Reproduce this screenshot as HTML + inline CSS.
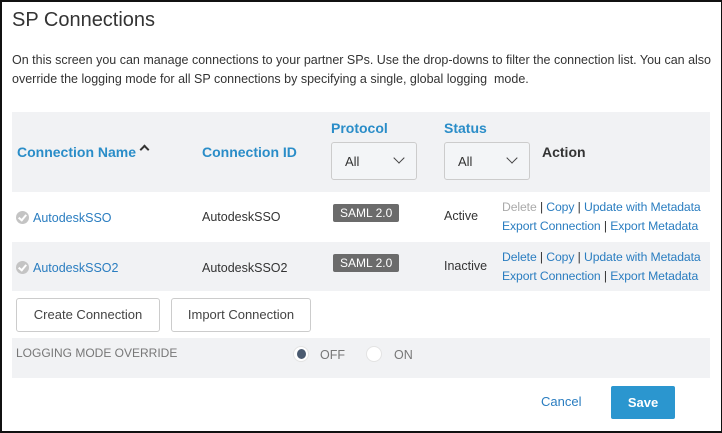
<!DOCTYPE html>
<html><head><style>
*{margin:0;padding:0;box-sizing:border-box}
body{width:722px;height:433px;background:#fff;font-family:"Liberation Sans",sans-serif;position:relative;overflow:hidden;color:#333}
.frame{position:absolute;left:0;top:0;width:722px;height:433px;border:2px solid #111;border-right-width:1px}
.a{position:absolute;white-space:nowrap}
.blue{color:#2a8dc8}
.link{color:#2a7dc0}
.gray{background:#f1f2f4}
.sel{position:absolute;width:86px;height:38px;border:1px solid #ccc;border-radius:3px;background:#f3f5f7;font-size:13px;padding:11px 0 0 13px}
.chev{position:absolute;right:13px;top:11px;width:8px;height:8px;border-right:1.5px solid #444;border-bottom:1.5px solid #444;transform:rotate(45deg)}
.badge{position:absolute;background:#6b6b6b;color:#fff;font-size:12px;padding:2px 7px;border-radius:2px;height:18px}
.chk{position:absolute;width:13px;height:13px;border-radius:50%;background:#c4c4c4}
.chk:after{content:"";position:absolute;left:4px;top:2px;width:3px;height:6px;border-right:2px solid #fff;border-bottom:2px solid #fff;transform:rotate(40deg)}
.btn{position:absolute;height:34px;border:1px solid #ccc;border-radius:3px;font-size:13px;color:#444;text-align:center;line-height:32px;background:#fff}
.act{font-size:12.2px;line-height:19px;letter-spacing:-0.1px}
</style></head><body>
<div class="frame"></div>
<div class="a" style="left:12px;top:9px;font-size:20px;color:#333">SP Connections</div>
<div class="a" style="left:12px;top:51px;font-size:12.5px;line-height:19px;color:#333">On this screen you can manage connections to your partner SPs. Use the drop-downs to filter the connection list. You can also<br>override the logging mode for all SP connections by specifying a single, global logging&nbsp; mode.</div>

<div class="a gray" style="left:12px;top:112px;width:698px;height:80px"></div>
<div class="a blue" style="left:17px;top:144px;font-size:14px;font-weight:bold">Connection Name</div>
<div class="a" style="left:141px;top:146px;width:7px;height:7px;border-left:2px solid #333;border-top:2px solid #333;transform:rotate(45deg)"></div>
<div class="a blue" style="left:202px;top:144px;font-size:14px;font-weight:bold">Connection ID</div>
<div class="a blue" style="left:331px;top:120px;font-size:14px;font-weight:bold">Protocol</div>
<div class="a blue" style="left:444px;top:120px;font-size:14px;font-weight:bold">Status</div>
<div class="sel" style="left:331px;top:142px">All<span class="chev"></span></div>
<div class="sel" style="left:444px;top:142px">All<span class="chev"></span></div>
<div class="a" style="left:542px;top:144px;font-size:14px;font-weight:bold;color:#333">Action</div>

<div class="chk" style="left:16px;top:211px"></div>
<div class="a link" style="left:33px;top:211px;font-size:12.5px">AutodeskSSO</div>
<div class="a" style="left:202px;top:210px;font-size:12.5px">AutodeskSSO</div>
<div class="badge" style="left:333px;top:204px">SAML 2.0</div>
<div class="a" style="left:444px;top:209px;font-size:12.5px">Active</div>
<div class="a act link" style="left:502px;top:198px"><span style="color:#aaa">Delete</span> <span style="color:#333">|</span> Copy <span style="color:#333">|</span> Update with Metadata<br>Export Connection <span style="color:#333">|</span> Export Metadata</div>

<div class="a gray" style="left:12px;top:242px;width:698px;height:49px"></div>
<div class="chk" style="left:16px;top:261px"></div>
<div class="a link" style="left:33px;top:261px;font-size:12.5px">AutodeskSSO2</div>
<div class="a" style="left:202px;top:261px;font-size:12.5px">AutodeskSSO2</div>
<div class="badge" style="left:333px;top:254px">SAML 2.0</div>
<div class="a" style="left:444px;top:259px;font-size:12.5px">Inactive</div>
<div class="a act link" style="left:502px;top:248px">Delete <span style="color:#333">|</span> Copy <span style="color:#333">|</span> Update with Metadata<br>Export Connection <span style="color:#333">|</span> Export Metadata</div>

<div class="btn" style="left:16px;top:298px;width:144px">Create Connection</div>
<div class="btn" style="left:171px;top:298px;width:140px">Import Connection</div>

<div class="a gray" style="left:12px;top:338px;width:698px;height:40px"></div>
<div class="a" style="left:16px;top:346px;font-size:12px;color:#777">LOGGING MODE OVERRIDE</div>
<div class="a" style="left:293px;top:346px;width:16px;height:16px;border-radius:50%;background:#fff;border:1px solid #e3e3e3"><div style="position:absolute;left:3px;top:2px;width:9px;height:10px;border-radius:50%;background:#4a5a70"></div></div>
<div class="a" style="left:320px;top:348px;font-size:12.5px;color:#777">OFF</div>
<div class="a" style="left:366px;top:346px;width:16px;height:16px;border-radius:50%;background:#fff;border:1px solid #e3e3e3"></div>
<div class="a" style="left:394px;top:348px;font-size:12.5px;color:#777">ON</div>

<div class="a link" style="left:541px;top:394px;font-size:13px">Cancel</div>
<div class="a" style="left:611px;top:386px;width:64px;height:33px;background:#2b96cf;border-radius:2px;color:#fff;font-weight:bold;font-size:13px;text-align:center;line-height:33px">Save</div>
</body></html>
